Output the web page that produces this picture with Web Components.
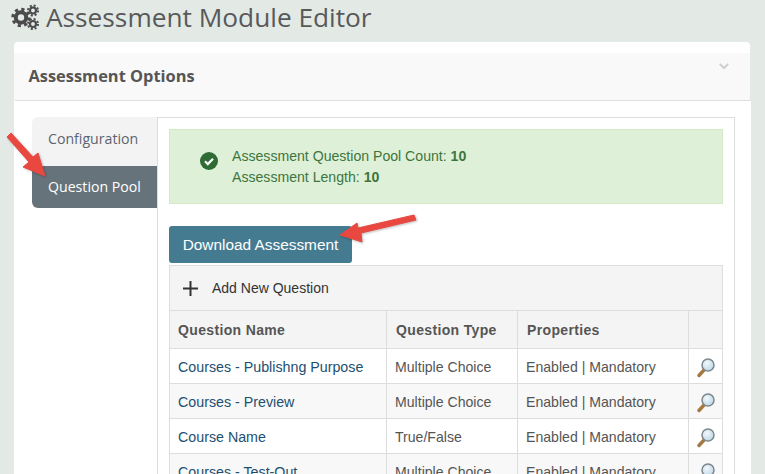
<!DOCTYPE html>
<html>
<head>
<meta charset="utf-8">
<title>Assessment Module Editor</title>
<style>
  html, body { margin: 0; height: 474px; overflow: hidden; background: #e3e9e4; }
</style>
</head>
<body>
<editor-page>
  <page-title>Assessment Module Editor</page-title>
  <options-card heading="Assessment Options">
    <tab-item slot="tabs">Configuration</tab-item>
    <tab-item slot="tabs" active>Question Pool</tab-item>
    <success-alert>
      <div>Assessment Question Pool Count: <b>10</b></div>
      <div>Assessment Length: <b>10</b></div>
    </success-alert>
    <action-button>Download Assessment</action-button>
    <question-table>
      <question-row name="Courses - Publishng Purpose" type="Multiple Choice"></question-row>
      <question-row name="Courses - Preview" type="Multiple Choice" alt></question-row>
      <question-row name="Course Name" type="True/False"></question-row>
      <question-row name="Courses - Test-Out" type="Multiple Choice" alt></question-row>
    </question-table>
  </options-card>
  <red-arrow points="7,137 11,133 33,157 38,153 45,176 23,167 29,162"></red-arrow>
  <red-arrow points="414,215 416,220 361,233 362,242 340,235 357,223 358,228"></red-arrow>
</editor-page>

<script>
const COLS = '217px 131px 171px 35px';

class EditorPage extends HTMLElement {
  constructor() {
    super();
    this.attachShadow({ mode: 'open' }).innerHTML = `
    <style>
      :host { display: block; position: relative; width: 765px; height: 474px; overflow: hidden; }
    </style>
    <slot></slot>`;
  }
}

class PageTitle extends HTMLElement {
  constructor() {
    super();
    this.attachShadow({ mode: 'open' }).innerHTML = `
    <style>
      :host {
        display: flex; align-items: center; gap: 5px;
        height: 42px; padding: 0 0 0 11px; box-sizing: border-box;
        font: 26.25px "Open Sans", sans-serif; color: #58595b;
      }
      .text { margin-top: -9px; }
      svg { margin-top: -9px; flex: none; }
    </style>
    <svg width="30" height="26" viewBox="0 0 30 26" fill="none" stroke="#4a4a4d">
      <circle cx="10" cy="13.5" r="5.2" stroke-width="4"/>
      <circle cx="10" cy="13.5" r="8.2" stroke-width="3" stroke-dasharray="3.2 3.24"/>
      <circle cx="22" cy="6.5" r="3" stroke-width="2.1"/>
      <circle cx="22" cy="6.5" r="5" stroke-width="2" stroke-dasharray="2 1.93"/>
      <circle cx="22" cy="20" r="3" stroke-width="2.1"/>
      <circle cx="22" cy="20" r="5" stroke-width="2" stroke-dasharray="2 1.93"/>
    </svg>
    <span class="text"><slot></slot></span>`;
  }
}

class OptionsCard extends HTMLElement {
  constructor() {
    super();
    this.attachShadow({ mode: 'open' }).innerHTML = `
    <style>
      :host {
        display: block; width: 736px; margin-left: 14px; padding-top: 11px;
        background: #fff; border-radius: 4px 4px 0 0; height: 432px;
      }
      .head {
        display: flex; align-items: center; justify-content: space-between;
        height: 47px; padding: 0 21px 0 14.5px; background: #f9f9f9;
        font: bold 16.4px "Open Sans", sans-serif; color: #555;
      }
      .head .title { margin-top: -2px; }
      .head svg { margin-top: -20px; }
      .body {
        display: flex; align-items: flex-start; box-sizing: border-box;
        margin-left: 1px; width: 736px; height: 374px; background: #fff;
        border-top: 1px solid #ddd; padding: 16px 0 0 17px;
      }
      .tabs { width: 126px; flex: none; display: flex; flex-direction: column; }
      .panel {
        margin-left: -1px; width: 578px; height: 400px; box-sizing: border-box;
        border: 1px solid #ddd; border-bottom: 0; padding: 11px 11px 0; background: #fff;
      }
    </style>
    <div class="head">
      <span class="title"></span>
      <svg width="10" height="7" viewBox="0 0 10 7" fill="none" stroke="#cfcfcf" stroke-width="2"><path d="M.8 1l4.2 4 4.2-4"/></svg>
    </div>
    <div class="body">
      <div class="tabs"><slot name="tabs"></slot></div>
      <div class="panel"><slot></slot></div>
    </div>`;
    this.shadowRoot.querySelector('.title').textContent = this.getAttribute('heading');
  }
}

class TabItem extends HTMLElement {
  constructor() {
    super();
    this.attachShadow({ mode: 'open' }).innerHTML = `
    <style>
      :host {
        display: flex; align-items: center; box-sizing: border-box;
        height: 49px; padding: 0 16px 6px; background: #f3f3f3; color: #5b6470;
        font: 14.15px "Open Sans", sans-serif; border-radius: 6px 0 0 0;
      }
      :host([active]) {
        height: 42px; padding-bottom: 2px; background: #67737a; color: #fff; border-radius: 0 0 0 6px;
      }
    </style>
    <slot></slot>`;
  }
}

class SuccessAlert extends HTMLElement {
  constructor() {
    super();
    this.attachShadow({ mode: 'open' }).innerHTML = `
    <style>
      :host {
        display: flex; align-items: center; gap: 14px; box-sizing: border-box;
        width: 554px; height: 75px; padding: 0 0 0 30px; margin-bottom: 22px;
        background: #dff0d8; border: 1px solid #d6e9c6;
        font: 14.1px/21px "Liberation Sans", Arial, sans-serif; color: #3c763d;
      }
      svg { flex: none; margin-top: -11px; }
    </style>
    <svg width="18" height="18" viewBox="0 0 18 18">
      <circle cx="9" cy="9" r="9" fill="#2f6b34"/>
      <path d="M5 9.3l2.8 2.8L13 6.8" fill="none" stroke="#fff" stroke-width="2.2"/>
    </svg>
    <div><slot></slot></div>`;
  }
}

class ActionButton extends HTMLElement {
  constructor() {
    super();
    this.attachShadow({ mode: 'open' }).innerHTML = `
    <style>
      :host {
        display: flex; align-items: center; justify-content: center; box-sizing: border-box;
        width: 183px; height: 37px; margin-bottom: 2px; border-radius: 3px;
        background: #457b91; color: #fff;
        font: 15.4px "Liberation Sans", Arial, sans-serif;
      }
    </style>
    <slot></slot>`;
  }
}

class QuestionTable extends HTMLElement {
  constructor() {
    super();
    this.attachShadow({ mode: 'open' }).innerHTML = `
    <style>
      :host {
        display: block; box-sizing: border-box; width: 554px;
        border: 1px solid #ddd; border-bottom: 0;
        font: 14.1px "Liberation Sans", Arial, sans-serif; color: #555;
      }
      .add {
        display: flex; align-items: center; gap: 14px; height: 44px; padding-left: 13px;
        background: #f4f4f4; color: #333; box-sizing: border-box; font-size: 14px;
      }
      .head {
        display: grid; grid-template-columns: ${COLS}; height: 39px; box-sizing: border-box;
        background: #f4f4f4; border-top: 1px solid #ddd; border-bottom: 1px solid #ddd;
        font-weight: bold; color: #555; font-size: 14px; letter-spacing: .35px;
      }
      .head div { display: flex; align-items: center; padding: 1px 0 0 8px; border-right: 1px solid #ddd; }
      .head div:nth-child(2), .head div:nth-child(3) { padding-left: 9px; }
      .head div:last-child { border-right: 0; }
    </style>
    <div class="add">
      <svg width="15" height="15" viewBox="0 0 15 15"><path d="M7.5 0v15M0 7.5h15" stroke="#333" stroke-width="2"/></svg>
      <span>Add New Question</span>
    </div>
    <div class="head"><div>Question Name</div><div>Question Type</div><div>Properties</div><div></div></div>
    <slot></slot>`;
  }
}

class QuestionRow extends HTMLElement {
  constructor() {
    super();
    this.attachShadow({ mode: 'open' }).innerHTML = `
    <style>
      :host {
        display: grid; grid-template-columns: ${COLS}; height: 35px; box-sizing: border-box;
        border-bottom: 1px solid #ddd; background: #fff;
      }
      :host([alt]) { background: #f8f8f8; }
      div { display: flex; align-items: center; padding: 2px 0 0 8px; border-right: 1px solid #ddd; white-space: nowrap; }
      div:last-child { border-right: 0; padding-top: 4px; }
      .name { color: #1d4f70; font-size: 14.25px; }
    </style>
    <div class="name"></div>
    <div class="type"></div>
    <div>Enabled | Mandatory</div>
    <div>
      <svg width="18" height="20" viewBox="0 0 18 20">
        <defs>
          <radialGradient id="lens" cx=".4" cy=".35" r=".7"><stop offset="0" stop-color="#f2f8fc"/><stop offset="1" stop-color="#bcd6e6"/></radialGradient>
        </defs>
        <path d="M7 12L2 17.5" stroke="#a57a42" stroke-width="3.4" stroke-linecap="round"/>
        <circle cx="11" cy="7" r="6" fill="url(#lens)" stroke="#7d888e" stroke-width="1.5"/>
      </svg>
    </div>`;
    this.shadowRoot.querySelector('.name').textContent = this.getAttribute('name');
    this.shadowRoot.querySelector('.type').textContent = this.getAttribute('type');
  }
}

// annotation arrows drawn on top of the screenshot
class RedArrow extends HTMLElement {
  constructor() {
    super();
    this.attachShadow({ mode: 'open' }).innerHTML = `
    <style>
      :host { position: absolute; left: 0; top: 0; width: 765px; height: 474px; pointer-events: none; }
      svg { display: block; filter: drop-shadow(1px 1px 1px rgba(0,0,0,.25)); }
    </style>
    <svg width="765" height="474" viewBox="0 0 765 474">
      <polygon points="${this.getAttribute('points')}" fill="#e8483f" stroke="#e8483f" stroke-linejoin="round"/>
    </svg>`;
  }
}

customElements.define('editor-page', EditorPage);
customElements.define('page-title', PageTitle);
customElements.define('options-card', OptionsCard);
customElements.define('tab-item', TabItem);
customElements.define('success-alert', SuccessAlert);
customElements.define('action-button', ActionButton);
customElements.define('question-table', QuestionTable);
customElements.define('question-row', QuestionRow);
customElements.define('red-arrow', RedArrow);
</script>
</body>
</html>
